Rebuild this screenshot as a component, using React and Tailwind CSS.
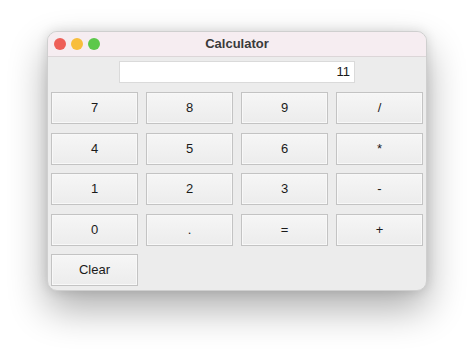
import React from "react";

const rows = [
  ["7", "8", "9", "/"],
  ["4", "5", "6", "*"],
  ["1", "2", "3", "-"],
  ["0", ".", "=", "+"],
];

function Btn({ label }) {
  return (
    <div className="flex h-[32px] items-center justify-center border border-[#c3c3c3] bg-gradient-to-b from-[#f6f6f6] to-[#ececec] text-[13px] text-[#1a1a1a] shadow-[inset_0_0_0_1px_#f8f8f8]">
      {label}
    </div>
  );
}

export default function App() {
  return (
    <div
      className="h-[353px] w-[474px] bg-white pl-[47px] pt-[31px]"
      style={{ fontFamily: '"Liberation Sans", Arial, sans-serif' }}
    >
      <div className="flex h-[260px] w-[380px] flex-col overflow-hidden rounded-[10px] border border-[#cfcfcf] bg-[#ececec] shadow-[0_18px_38px_rgba(0,0,0,0.32),0_0_12px_rgba(0,0,0,0.12)]">
        <div className="relative flex h-[25px] shrink-0 items-center justify-center border-b border-[#dcd6d8] bg-[#f6edf1]">
          <div className="absolute left-[6px] top-[6px] flex gap-[5px]">
            <div className="h-[12px] w-[12px] rounded-full bg-[#ee5f58]" />
            <div className="h-[12px] w-[12px] rounded-full bg-[#f8be3c]" />
            <div className="h-[12px] w-[12px] rounded-full bg-[#5cc84a]" />
          </div>
          <span className="text-[13px] font-bold text-[#3a3a3a]">Calculator</span>
        </div>
        <div className="flex flex-col px-[3px] pt-[5px]">
          <div className="flex justify-center">
            <div className="flex h-[20px] w-[234px] items-center justify-end bg-white pr-[4px] text-[13px] text-[#1a1a1a] shadow-[0_0_0_1px_#dadada]">
              11
            </div>
          </div>
          <div className="mt-[10px] grid grid-cols-4 gap-x-[8px] gap-y-[8.5px]">
            {rows.flat().map((l) => (
              <Btn key={l} label={l} />
            ))}
            <Btn label="Clear" />
          </div>
        </div>
      </div>
    </div>
  );
}
